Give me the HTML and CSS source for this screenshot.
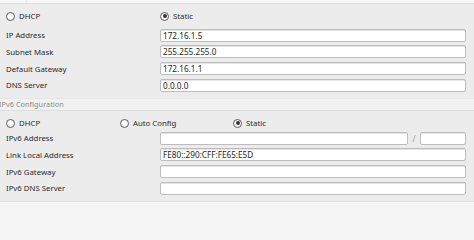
FILE: index.html
```html
<!DOCTYPE html>
<html>
<head>
<meta charset="utf-8">
<link rel="stylesheet" href="styles.css">
</head>
<body>
<div class="top-edge"><span class="tick"></span></div>
<div class="panel panel-v4">
  <div class="radio-row">
    <label class="radio col-a"><span class="dot"></span>DHCP</label>
    <label class="radio col-input"><span class="dot on"></span>Static</label>
  </div>
  <div class="rows">
    <div class="row"><span class="lbl">IP Address</span><span class="field">172.16.1.5</span></div>
    <div class="row"><span class="lbl">Subnet Mask</span><span class="field">255.255.255.0</span></div>
    <div class="row"><span class="lbl">Default Gateway</span><span class="field">172.16.1.1</span></div>
    <div class="row"><span class="lbl">DNS Server</span><span class="field">0.0.0.0</span></div>
  </div>
</div>
<div class="section-label">IPv6 Configuration</div>
<div class="panel panel-v6">
  <div class="radio-row">
    <label class="radio col-a6"><span class="dot"></span>DHCP</label>
    <label class="radio col-b6"><span class="dot"></span>Auto Config</label>
    <label class="radio"><span class="dot on"></span>Static</label>
  </div>
  <div class="rows">
    <div class="row"><span class="lbl">IPv6 Address</span><span class="field addr"></span><span class="slash">/</span><span class="field prefix"></span></div>
    <div class="row"><span class="lbl">Link Local Address</span><span class="field">FE80::290:CFF:FE65:E5D</span></div>
    <div class="row"><span class="lbl">IPv6 Gateway</span><span class="field"></span></div>
    <div class="row"><span class="lbl">IPv6 DNS Server</span><span class="field"></span></div>
  </div>
</div>
</body>
</html>
```

FILE: styles.css
```css
* { box-sizing: border-box; }
html, body { margin: 0; padding: 0; }
body {
  width: 474px;
  height: 206px;
  overflow: hidden;
  background: #f5f5f5;
  font-family: "Noto Sans", "DejaVu Sans", sans-serif;
  font-size: 7.8px;
  color: #2a2a2a;
}
.top-edge {
  height: 4px;
  border-bottom: 1px solid #e0e0e0;
  position: relative;
}
.tick {
  position: absolute;
  left: 26px;
  top: 0;
  width: 1px;
  height: 3px;
  background: #e6e6e6;
}
.panel {
  background: #ececec;
  padding: 5px 8px 0 6px;
}
.panel-v4 { height: 94px; }
.panel-v6 { height: 91px; border-bottom: 1px solid #e2e2e2; }
.radio-row {
  height: 14px;
  display: flex;
  align-items: center;
}
.panel-v4 .rows { margin-top: 4px; }
.radio {
  display: flex;
  align-items: center;
  color: #2a2a2a;
  font-size: 7.8px;
}
.col-a { width: 154px; }
.col-a6 { width: 114px; }
.col-b6 { width: 113px; }
.dot {
  width: 9px;
  height: 9px;
  border: 1px solid #5a5a5a;
  border-radius: 50%;
  background: #fafafa;
  margin-right: 4px;
  display: flex;
  align-items: center;
  justify-content: center;
}
.dot.on::after {
  content: "";
  width: 4px;
  height: 4px;
  border-radius: 50%;
  background: #333;
}
.row {
  height: 16.67px;
  display: flex;
  align-items: center;
}
.lbl {
  width: 154px;
  flex: none;
  color: #2a2a2a;
}
.field {
  flex: 1;
  height: 13px;
  background: #fff;
  border: 1px solid #bdbdbd;
  border-radius: 2px;
  box-shadow: inset 0 1px 0 #e4e4e4;
  padding-left: 2px;
  font-size: 8.2px;
  line-height: 11px;
  color: #1e1e1e;
  white-space: nowrap;
}
.field.addr { flex: none; width: 248px; }
.slash {
  width: 12px;
  text-align: center;
  color: #999;
  font-size: 8px;
}
.field.prefix { flex: none; width: 46px; }
.section-label {
  height: 13px;
  background: #f1f1f1;
  border-top: 1px solid #e6e6e6;
  border-bottom: 1px solid #dcdcdc;
  color: #8a8a8a;
  font-size: 7.4px;
  line-height: 11px;
  padding-left: 0;
  margin-left: -1px;
}
```
